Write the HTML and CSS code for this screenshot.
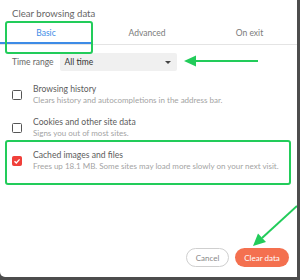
FILE: index.html
```html
<!DOCTYPE html>
<html lang="en">
<head>
    <meta charset="UTF-8">
    <title>Clear browsing data</title>
    <link rel="stylesheet" href="styles.css">
</head>
<body>
    <div class="dialog">
        <div class="title">Clear browsing data</div>

        <div class="tabs">
            <div class="tab active">Basic</div>
            <div class="tab">Advanced</div>
            <div class="tab">On exit</div>
        </div>

        <div class="range">
            <span class="range-label">Time range</span>
            <div class="select">
                <span>All time</span>
                <span class="caret"></span>
            </div>
        </div>

        <div class="options">
            <div class="option">
                <span class="check"></span>
                <div class="option-text">
                    <div class="option-title">Browsing history</div>
                    <div class="option-sub">Clears history and autocompletions in the address bar.</div>
                </div>
            </div>
            <div class="option">
                <span class="check"></span>
                <div class="option-text">
                    <div class="option-title">Cookies and other site data</div>
                    <div class="option-sub">Signs you out of most sites.</div>
                </div>
            </div>
            <div class="option">
                <span class="check checked">
                    <svg viewBox="0 0 10 10" width="10" height="10">
                        <path d="M2.5 5.2 L4.3 7 L7.6 3.4" fill="none" stroke="#fff" stroke-width="1.4"/>
                    </svg>
                </span>
                <div class="option-text">
                    <div class="option-title">Cached images and files</div>
                    <div class="option-sub">Frees up 18.1 MB. Some sites may load more slowly on your next visit.</div>
                </div>
            </div>
        </div>

        <div class="footer">
            <button class="btn btn-cancel">Cancel</button>
            <button class="btn btn-clear">Clear data</button>
        </div>

        <!-- annotations drawn on top of the screenshot -->
        <div class="mark mark-tab"></div>
        <div class="mark mark-cache"></div>
        <svg class="arrows" width="297" height="277" viewBox="0 0 297 277">
            <line x1="258" y1="61" x2="192" y2="61" stroke="#22cc5a" stroke-width="2"/>
            <polygon points="184,61 196,55.5 196,66.5" fill="#22cc5a"/>
            <line x1="297" y1="206" x2="262" y2="238" stroke="#22cc5a" stroke-width="2"/>
            <polygon points="253,246 258,233.5 266,242" fill="#22cc5a"/>
        </svg>
    </div>
</body>
</html>
```

FILE: styles.css
```css
:root {
    --text: #555;
    --muted: #a3a3a3;
    --blue: #3d8be6;
    --green: #22cc5a;
    --coral: #f4704f;
}

* {
    box-sizing: border-box;
    margin: 0;
    padding: 0;
}

body {
    background: #4d4d4d;
    font-family: 'Lato', 'Open Sans', sans-serif;
    color: var(--text);
    width: 300px;
    height: 280px;
    overflow: hidden;
}

.dialog {
    position: relative;
    width: 297px;
    height: 277px;
    background: #fff;
    border-bottom-left-radius: 5px;
    display: flex;
    flex-direction: column;
}

.title {
    height: 22px;
    padding: 7px 0 0 12px;
    font-size: 9.6px;
    line-height: 13px;
    color: #666;
}

.tabs {
    display: grid;
    grid-template-columns: 92px 110px 1fr;
    height: 23px;
    border-bottom: 1px solid #e4e4e4;
}

.tab {
    text-align: center;
    font-size: 8.5px;
    line-height: 22px;
    color: #7a7a7a;
}

.tab.active {
    color: var(--blue);
    box-shadow: inset 0 -2px 0 var(--blue);
}

.range {
    display: flex;
    align-items: center;
    gap: 6px;
    padding: 8px 0 0 12px;
}

.range-label {
    font-size: 8.5px;
    color: #666;
}

.select {
    width: 117px;
    height: 18px;
    background: #f0f0f0;
    border-radius: 2px;
    display: flex;
    align-items: center;
    justify-content: space-between;
    padding: 0 6px 0 5px;
    font-size: 8.5px;
    color: #333;
}

.caret {
    width: 0;
    height: 0;
    border-left: 3px solid transparent;
    border-right: 3px solid transparent;
    border-top: 3px solid #444;
}

.options {
    margin-top: 7px;
}

.option {
    display: flex;
    align-items: center;
    height: 33px;
    padding-left: 12px;
    gap: 11px;
}

.check {
    width: 10px;
    height: 10px;
    border: 1.5px solid #555;
    border-radius: 1.5px;
    flex-shrink: 0;
    display: flex;
}

.check.checked {
    background: #f0403a;
    border-color: #f0403a;
    align-items: center;
    justify-content: center;
}

.check.checked svg {
    flex-shrink: 0;
}

.option-title {
    font-size: 8.6px;
    line-height: 11px;
    color: #5c5c5c;
}

.option-sub {
    font-size: 8px;
    line-height: 11px;
    color: var(--muted);
    white-space: nowrap;
}

.footer {
    margin-top: auto;
    display: flex;
    justify-content: flex-end;
    gap: 6px;
    padding: 0 8px 10px 0;
}

.btn {
    height: 19px;
    border-radius: 10px;
    font-family: inherit;
    font-size: 8px;
}

.btn-cancel {
    width: 43px;
    background: #fff;
    border: 1px solid #cfcfcf;
    color: #888;
}

.btn-clear {
    width: 54px;
    background: var(--coral);
    border: none;
    color: #fff;
}

.mark {
    position: absolute;
    border: 2px solid var(--green);
    border-radius: 3px;
}

.mark-tab {
    left: 5px;
    top: 21px;
    width: 88px;
    height: 33px;
}

.mark-cache {
    left: 5px;
    top: 140px;
    width: 286px;
    height: 45px;
}

.arrows {
    position: absolute;
    left: 0;
    top: 0;
}
```
